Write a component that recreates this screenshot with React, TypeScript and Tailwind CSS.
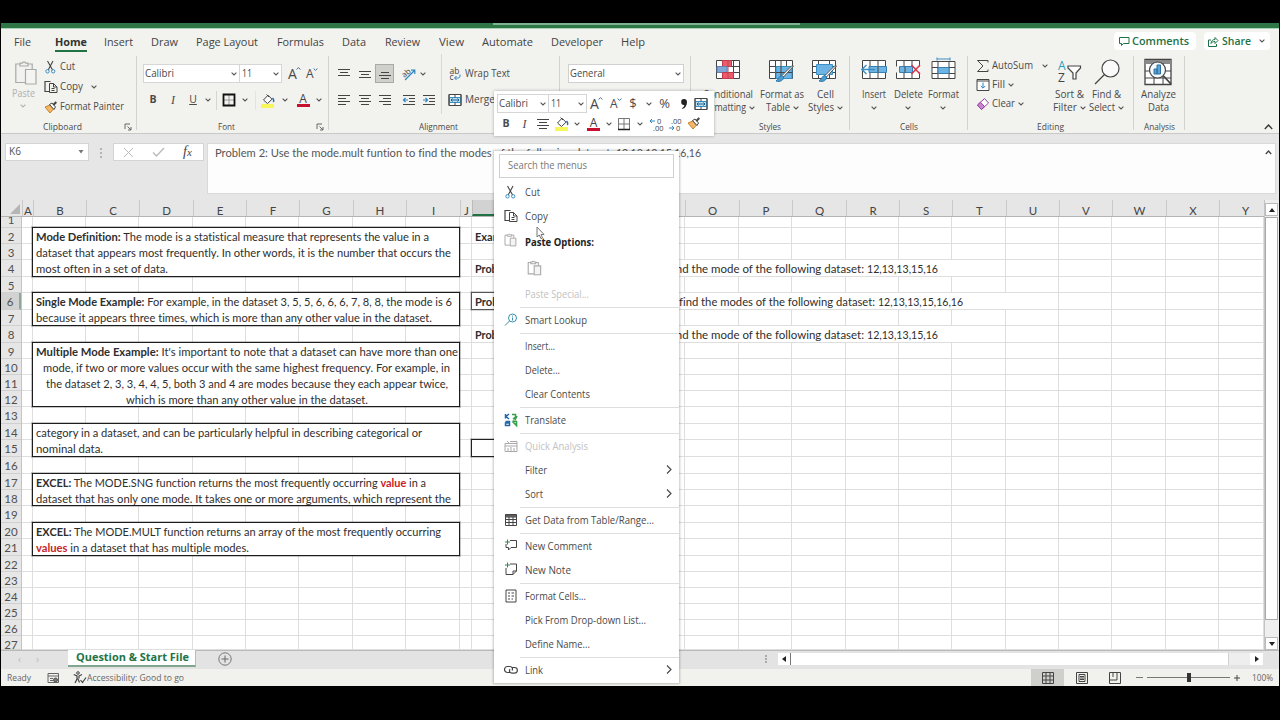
import React, { useLayoutEffect, useRef } from "react";

const UI = "font-['Open_Sans',sans-serif]";
const CELL = "font-['Lato',sans-serif] [font-variant-ligatures:none]";

/* Text that is condensed or stretched to fill the width of its box. */
function Fit({ className = "", children }: { className?: string; children: React.ReactNode }) {
  const box = useRef<HTMLSpanElement>(null);
  const inner = useRef<HTMLSpanElement>(null);
  useLayoutEffect(() => {
    if (!box.current || !inner.current) return;
    inner.current.style.transform = "none";
    const want = box.current.getBoundingClientRect().width;
    const have = inner.current.getBoundingClientRect().width;
    if (have > 0) inner.current.style.transform = `scaleX(${want / have})`;
  }, []);
  return (
    <span ref={box} className={`block shrink-0 whitespace-nowrap ${className}`}>
      <span ref={inner} className="inline-block origin-left whitespace-pre">{children}</span>
    </span>
  );
}

function V({ className = "" }: { className?: string }) {
  return (
    <svg viewBox="0 0 6 4" className={`h-1 w-1.5 shrink-0 ${className}`} fill="none" stroke="#555" strokeWidth="1.1">
      <path d="M.6.7 3 3 5.4.7" />
    </svg>
  );
}
function Caret({ up }: { up?: boolean }) {
  return (
    <svg viewBox="0 0 5 3" width="5" height="3" className="-ml-px shrink-0" fill="none" stroke="#3f6f94" strokeWidth="1">
      <path d={up ? "M.6 2.500 2.500.6l1.900 1.900" : "M.6.5l1.900 1.900L4.400.5"} />
    </svg>
  );
}

type S = { className?: string };
const Svg = ({ w, h, className = "", children }: { w: number; h: number; className?: string; children: React.ReactNode }) => (
  <svg width={w} height={h} viewBox={`0 0 ${w} ${h}`} className={`shrink-0 overflow-visible ${className}`} fill="none" stroke="#444" strokeWidth="1">
    {children}
  </svg>
);

const CutIcon = ({ className }: S) => (
  <Svg w={13} h={14} className={className}>
    <path d="M3.5 1 8.600 10M9 1 4.200 10" strokeWidth="1.1" />
    <circle cx="3.5" cy="11.3" r="1.7" stroke="#3a8fc4" />
    <circle cx="9.2" cy="11.3" r="1.7" stroke="#3a8fc4" />
  </Svg>
);
const CopyIcon = ({ className }: S) => (
  <Svg w={14} h={14} className={className}>
    <path d="M5 11.500H1V1.500h5.500" strokeWidth="1.2" />
    <path d="M5.500 3.500h4L13 7v5.500H5.500zM9.500 3.500V7H13M7.500 8.500h3M7.500 10.500h3" />
  </Svg>
);
const PainterIcon = ({ className }: S) => (
  <Svg w={14} h={13} className={className}>
    <path d="M1 6 6 4l3.500 4L6 12z" fill="#f3b765" stroke="#c9822b" />
    <path d="M5.500 3.500 8 2l3.500 4L10 8.500z" fill="#fff" />
    <path d="m9.300 4 3-3" strokeWidth="2" />
  </Svg>
);
const PasteIcon = ({ w = 24, h = 26 }: { w?: number; h?: number }) => (
  <svg width={w} height={h} viewBox="0 0 24 26" fill="none" stroke="#a9a9a9" strokeWidth={w > 20 ? 1.2 : 1.8} className="shrink-0">
    <path d="M11 22.500H1.800V4H6M14 4h4.200v5M6 6V3.200h2.400C8.600 1.500 11.400 1.500 11.600 3.200H14V6z" />
    <path d="M11.500 9.500h10.500v14.500h-10.500z" fill="#f4f4f2" />
  </svg>
);
const Lines = ({ kind, className }: { kind: string; className?: string }) => {
  const d: Record<string, string> = {
    top: "M1 2.500h12M3 5.500h8M1 8.500h12",
    mid: "M1 4.500h12M3 7.500h8M1 10.500h12",
    bot: "M3 5.500h8M1 8.500h12M3 11.500h8",
    left: "M1 2.500h12M1 5.500h8M1 8.500h12M1 11.500h8",
    center: "M1 2.500h12M3 5.500h8M1 8.500h12M3 11.500h8",
    right: "M1 2.500h12M5 5.500h8M1 8.500h12M5 11.500h8",
  };
  return <Svg w={14} h={14} className={className}><path d={d[kind]} /></Svg>;
};
const Indent = ({ out }: { out?: boolean }) => (
  <Svg w={14} h={14}>
    <path d="M1 2.500h12M7 5.500h6M7 8.500h6M1 11.500h12" />
    <path d={out ? "M6 7H1.500M3.500 5l-2 2 2 2" : "M1 7h4.500M3.500 5l2 2-2 2"} stroke="#2e86c1" strokeWidth="1.2" />
  </Svg>
);
const Bucket = () => (
  <Svg w={15} h={15}>
    <path d="M0 11h13v4H0z" fill="#f7f75a" stroke="none" />
    <path d="M2.500 7 7 2.200l4 4-4.500 4.300zM5.500 1.500 8 4" fill="#fff" />
    <path d="M11.500 5c1.400 1.600 1.500 3 .8 4" stroke="#2e6da4" strokeWidth="1.400" />
  </Svg>
);
const FontColor = () => (
  <span className="flex w-[13px] flex-col items-center">
    <span className="text-[12px] leading-[11px] text-[#444]">A</span>
    <span className="h-[3px] w-[13px] bg-[#c8102e]" />
  </span>
);
const MergeIcon = ({ className }: S) => (
  <Svg w={14} h={14} className={className}>
    <path d="M1 1.500h12v11H1z" fill="#fff" />
    <path d="M1.500 4.500h11v5h-11z" fill="#b9def2" stroke="#3a8fc4" />
    <path d="M3 7h8M4.500 5.500 3 7l1.500 1.500M9.500 5.500 11 7 9.500 8.500" stroke="#1f5f8b" />
    <path d="M7 1.500v3M7 9.500v3M1 1.500h12v11H1z" />
  </Svg>
);
const BorderThick = () => (
  <Svg w={14} h={14}><path d="M7 2v10M2 7h10" stroke="#999" /><path d="M1.500 1.500h11v11h-11z" stroke="#111" strokeWidth="1.800" /></Svg>
);
const BorderThin = () => (
  <Svg w={14} h={14}><path d="M7 1v11M1 7h12M1.500 12V1.500h11V12" stroke="#777" /><path d="M1 12.500h12" stroke="#222" strokeWidth="1.500" /></Svg>
);
const Launcher = () => (
  <Svg w={8} h={8}><path d="M1 6V1h5M3.500 3.500 7 7M7 4v3H4" stroke="#666" /></Svg>
);
const tableGrid = "M.5 2.500h23v18H.5zM.5 8.500h23M.5 14.500h23M6.500 2.500v18M17.500 2.500v18";
const CondIcon = () => (
  <Svg w={24} h={24}>
    <path d={tableGrid} fill="#fff" />
    <path d="M6.500 2.500h9v6h-9z" fill="#ee5a6a" stroke="#c23b4c" />
    <path d="M1 8.500h10v6H1z" fill="#7fa9d8" stroke="#6a7fae" />
    <path d="M6.500 14.500h11v6h-11z" fill="#ee5a6a" stroke="#c23b4c" />
    <path d="M12 2.500v18" stroke="#b04a5a" />
  </Svg>
);
const Brush = () => (
  <>
    <path d="M24.500 8 14.500 19l-1.500-1.500L22.500 8z" fill="#fff" stroke="#555" />
    <path d="M13 17.500c-3 0-3 3.500-6 5.500 4 1.500 8-1 7.500-4z" fill="#4b9cd3" stroke="#2f78ab" />
  </>
);
const FmtTable = () => (
  <Svg w={26} h={26}><path d={tableGrid} fill="#fff" /><path d="M7 8.500h16v12H7z" fill="#6db3e3" stroke="#3a8fc4" /><path d="M12 2.500v18M7 14.500h16" /><Brush /></Svg>
);
const CellStyle = () => (
  <Svg w={26} h={26}><path d={tableGrid} fill="#fff" /><path d="M4.500 6.500h16v10h-16z" fill="#6db3e3" stroke="#3a8fc4" /><Brush /></Svg>
);
const InsertIcon = () => (
  <Svg w={26} h={24}>
    <path d="M1.500 2.500h23v18h-23zM9 2.500v18M17 2.500v18" fill="#fff" />
    <path d="M8 8.500h17.500v6H8z" fill="#6db3e3" stroke="#3a7fb0" /><path d="M17 8.500v6" />
    <path d="M14 11.500H.8M5.500 7l-4.700 4.500 4.700 4.500" stroke="#3a8fc4" strokeWidth="1.400" />
  </Svg>
);
const DeleteIcon = () => (
  <Svg w={26} h={24}>
    <path d="M1.500 2.500h23v18h-23zM9 2.500v18M17 2.500v18" fill="#fff" />
    <path d="M0 8.500h26v6H0z" fill="#f3f3f0" stroke="none" /><path d="M4.500 8.500h13v6h-13z" fill="#6db3e3" stroke="#3a7fb0" /><path d="M10 8.500v6" />
    <path d="m16.500 7 8.500 9M25 7l-8.500 9" stroke="#d9364a" strokeWidth="1.500" />
  </Svg>
);
const FormatIcon = () => (
  <Svg w={25} h={26} className="-mt-px">
    <path d="M6 .5v3M19 .5v3M6 2h13" stroke="#3a8fc4" />
    <path d="M1 4.500h23v17H1zM1 10.500h23M1 16.500h23M7 4.500v17M18 4.500v17" fill="#fff" />
    <path d="M7 10.500h11v6H7z" fill="#6db3e3" stroke="#3a7fb0" />
  </Svg>
);
const AnalyzeIcon = () => (
  <Svg w={28} h={28}>
    <path d="M1 1.500h26v25H1z" fill="#fff" strokeWidth="1.300" /><path d="M1 2h26v4H1z" fill="#8a8a8a" stroke="none" />
    <path d="M1 13h26M1 20h26M10 5v22M19 5v22" />
    <circle cx="13.500" cy="12" r="8" fill="#f4faff" strokeWidth="1.200" />
    <path d="M10 11v5h3v-5zM13 7v9h3.500V7z" fill="#5ba4d6" stroke="#2f6f9f" />
    <path d="M19.500 18 27 26" strokeWidth="1.800" />
  </Svg>
);

function Big({ icon, a, b, w, wa, wb, chev = true }: { icon: React.ReactNode; a: string; b?: string; w: string; wa: string; wb?: string; chev?: boolean }) {
  return (
    <div className={`flex shrink-0 flex-col items-center pt-1 ${w}`}>
      <div className="flex h-[29px] items-start justify-center">{icon}</div>
      <Fit className={`leading-[14px] ${wa}`}>{a}</Fit>
      <div className="flex h-[13px] items-center justify-center gap-[3px]">
        {b && <Fit className={`leading-[13px] ${wb}`}>{b}</Fit>}
        {chev && <V />}
      </div>
    </div>
  );
}

function Group({ w, label, lw, launch, children, border = true }: { w: string; label: string; lw: string; launch?: boolean; children: React.ReactNode; border?: boolean }) {
  return (
    <section className={`flex h-20 shrink-0 flex-col ${w}`}>
      <div className="flex h-[76px] flex-col">
        <div className={`mt-0.5 flex h-[74px] flex-col ${border ? "border-r border-[#d2d2d0]" : ""}`}>
          <div className="-mt-0.5 flex h-[66px] shrink-0">{children}</div>
          <div className="flex h-[14px] shrink-0 items-center justify-center text-[9px] text-[#4a4a4a]">
            <span className="flex flex-1 justify-center"><Fit className={`leading-[14px] ${lw}`}>{label}</Fit></span>
            {launch && <span className="w-[12px]"><Launcher /></span>}
          </div>
        </div>
      </div>
    </section>
  );
}

const C = ({ w, children }: { w: string; children?: React.ReactNode }) => (
  <span className={`flex h-full shrink-0 items-center justify-center ${w}`}>{children}</span>
);

const tabs: [string, string][] = [
  ["File", "ml-[13px] w-[17px]"], ["Home", "ml-[24px] w-[32px]"], ["Insert", "ml-[17px] w-[29px]"], ["Draw", "ml-[18px] w-[27px]"],
  ["Page Layout", "ml-[18px] w-[62px]"], ["Formulas", "ml-[19px] w-[47px]"], ["Data", "ml-[18px] w-[24px]"], ["Review", "ml-[19px] w-[35px]"],
  ["View", "ml-[19px] w-[25px]"], ["Automate", "ml-[18px] w-[51px]"], ["Developer", "ml-[18px] w-[52px]"], ["Help", "ml-[18px] w-[24px]"],
];

function Tabs() {
  return (
    <nav className="flex h-[25px] shrink-0 items-start text-[11px] text-[#444]">
      {tabs.map(([t, c]) => (
        <div key={t} className={`flex h-[23px] shrink-0 flex-col ${c} ${t === "Home" ? "border-b-2 border-[#217346] font-bold text-[#333]" : ""}`}>
          <Fit className="w-full leading-[25px]">{t}</Fit>
        </div>
      ))}
      <div className="ml-auto mr-[9px] flex gap-2 pt-[3px] font-semibold text-[#1e7145]">
        <div className="flex h-[18px] w-[82px] items-center rounded-sm bg-white pl-[5px]">
          <Svg w={11} h={11}><path d="M.5 1.500h9.500v6H4.500L2.500 9.500v-2h-2z" stroke="#1e7145" /></Svg>
          <Fit className="ml-0.5 w-[57px]">Comments</Fit>
        </div>
        <div className="flex h-[18px] w-[66px] items-center rounded-sm bg-white pl-[4px]">
          <Svg w={11} h={11}><path d="M3 4H.5v6.500h8V8M3 7.500c.3-3 2-4 4-4V1.500l3 3-3 3V5.500c-2 0-3 .5-4 2z" stroke="#1e7145" /></Svg>
          <Fit className="ml-[3px] w-[29px]">Share</Fit>
          <V className="ml-2" />
        </div>
      </div>
    </nav>
  );
}

function Ribbon() {
  return (
    <div className="flex h-20 shrink-0 border-b border-[#c9c9c7] text-[10.500px] text-[#4a4a4a]">
      <Group w="w-[136px]" label="Clipboard" lw="w-[39px]" launch>
        <div className="flex w-[43px] flex-col items-center pt-[6px] text-[#b0b0b0]">
          <span className="pl-1.5"><PasteIcon /></span>
          <Fit className="mt-px ml-0.5 w-[23px] leading-[13px]">Paste</Fit>
          <V className="mt-1 opacity-40" />
        </div>
        <div className="flex flex-col pt-[3px]">
          <div className="flex h-5 items-center"><CutIcon /><Fit className="ml-[3px] w-[15px]">Cut</Fit></div>
          <div className="flex h-5 items-center"><CopyIcon /><Fit className="ml-[2px] w-[23px]">Copy</Fit><V className="ml-2" /></div>
          <div className="flex h-5 items-center"><PainterIcon /><Fit className="ml-[2px] w-[64px]">Format Painter</Fit></div>
        </div>
      </Group>
      <Group w="w-[192px]" label="Font" lw="w-[17px]" launch>
        <div className="flex flex-col pl-[6px] pt-[6px]">
          <div className="flex h-[27px] items-center">
            <div className="flex h-[19px] w-[97px] items-center border border-[#d6d6d6] bg-white pl-px"><Fit className="w-[29px]">Calibri</Fit><V className="ml-auto mr-0.5" /></div>
            <div className="flex h-[19px] w-[42px] items-center border border-l-0 border-[#d6d6d6] bg-white pl-0.5"><Fit className="w-[10px]">11</Fit><V className="ml-auto mr-0.5" /></div>
            <span className="ml-1 flex w-[20px] pl-0.5 text-[14px] leading-none">A<Caret up /></span>
            <span className="flex text-[12px] leading-none">A<Caret /></span>
          </div>
          <div className="flex h-[26px] items-center">
            <C w="w-[20px]"><b>B</b></C><C w="w-[20px]"><i className="font-['Liberation_Serif',serif] text-[12px]">I</i></C><C w="w-[20px]"><u>U</u></C><C w="w-[10px]"><V /></C>
            <span className="ml-[3px] h-[19px] w-px bg-[#d5d5d3]" />
            <C w="w-[24px]"><BorderThick /></C><C w="w-[8px]"><V /></C>
            <span className="ml-1.5 h-[19px] w-px bg-[#e3e3e1]" />
            <C w="w-[25px]"><Bucket /></C><C w="w-[8px]"><V /></C>
            <C w="w-[28px]"><FontColor /></C><C w="w-[4px]"><V /></C>
          </div>
        </div>
      </Group>
      <Group w="w-[231px]" label="Alignment" lw="w-[39px]" launch>
        <div className="flex h-[60px] w-[113px] flex-col border-r border-[#d8d8d6] pl-[5px] pt-[6px]">
          <div className="flex h-[27px] items-center">
            <C w="w-[20px]"><Lines kind="top" /></C><C w="w-[21px]"><Lines kind="mid" /></C>
            <span className="flex h-[19px] w-[19px] items-center justify-center border border-[#a9a9a7] bg-[#cfcfcc]"><Lines kind="bot" /></span>
            <C w="w-[30px]"><Svg w={14} h={14}><path d="M3 13 12.500 3.500M9 3.200h3.800V7" stroke="#2e86c1" strokeWidth="1.200" /><text x="0" y="9" fontSize="8" fill="#444" stroke="none" transform="rotate(-40 4 7)">ab</text></Svg></C>
            <V className="-ml-1" />
          </div>
          <div className="flex h-[26px] items-center">
            <C w="w-[20px]"><Lines kind="left" /></C><C w="w-[21px]"><Lines kind="center" /></C><C w="w-[19px]"><Lines kind="right" /></C>
            <C w="w-[30px]"><Indent out /></C><C w="w-[10px]"><Indent /></C>
          </div>
        </div>
        <div className="flex flex-col pl-[6px] pt-[6px]">
          <div className="flex h-[27px] items-center">
            <Svg w={14} h={14}><text x="1.500" y="7" fontSize="8.500" fill="#444" stroke="none">ab</text><text x="1.500" y="13" fontSize="8.500" fill="#444" stroke="none">c</text><path d="M12 7.500v1.500c0 1.500-1 2-2.500 2H7M8.500 9l-2 2 2 2" stroke="#2e86c1" /></Svg>
            <Fit className="ml-[3px] w-[45px]">Wrap Text</Fit>
          </div>
          <div className="flex h-[26px] items-center"><MergeIcon /><Fit className="ml-[3px] w-[74px]">Merge &amp; Center</Fit></div>
        </div>
      </Group>
      <Group w="w-[131px]" label="Number" lw="w-[32px]" launch>
        <div className="flex pl-[8px] pt-[10px]">
          <div className="flex h-[19px] w-[116px] items-center border border-[#d0d0d0] bg-white pl-px"><Fit className="w-[35px]">General</Fit><V className="ml-auto mr-0.5" /></div>
        </div>
      </Group>
      <Group w="w-[159px]" label="Styles" lw="w-[22px]">
        <div className="flex pl-[10px]">
          <Big w="w-[54px]" icon={<CondIcon />} a="Conditional" wa="w-[50px]" b="Formatting" wb="w-[45px]" />
          <Big w="w-[54px]" icon={<FmtTable />} a="Format as" wa="w-[44px]" b="Table" wb="w-[24px]" />
          <Big w="w-[32px]" icon={<CellStyle />} a="Cell" wa="w-[17px]" b="Styles" wb="w-[26px]" />
        </div>
      </Group>
      <Group w="w-[118px]" label="Cells" lw="w-[18px]">
        <div className="flex pl-[8px]">
          <Big w="w-[32px]" icon={<InsertIcon />} a="Insert" wa="w-[24px]" />
          <Big w="w-[36px]" icon={<DeleteIcon />} a="Delete" wa="w-[29px]" />
          <Big w="w-[34px]" icon={<FormatIcon />} a="Format" wa="w-[31px]" />
        </div>
      </Group>
      <Group w="w-[166px]" label="Editing" lw="w-[27px]">
        <div className="flex w-[82px] flex-col pl-[8px] pt-[2px]">
          <div className="flex h-[19px] items-center"><Svg w={14} h={14}><path d="M12 3.500V1.500H1.500L7 7l-5.500 5.500H12v-2" /></Svg><Fit className="ml-[2px] w-[41px]">AutoSum</Fit><V className="ml-[9px]" /></div>
          <div className="flex h-[19px] items-center"><Svg w={14} h={14}><path d="M1 1.500h12v11H1z" fill="#fff" /><path d="M1 3h12" /><path d="M7 4.500V10M4.800 8 7 10.200 9.200 8" stroke="#2e86c1" /></Svg><Fit className="ml-[2px] w-[13px]">Fill</Fit><V className="ml-[3px]" /></div>
          <div className="flex h-[19px] items-center"><Svg w={14} h={14}><path d="M1.500 8 8.500 1.500l4 4.500-7 6.500z" fill="#fff" stroke="#9b3fa5" /><path d="M1.500 8 4.500 5.200l4 4.500-3 2.800z" fill="#c887cf" stroke="#9b3fa5" /></Svg><Fit className="ml-[2px] w-[23px]">Clear</Fit><V className="ml-[3px]" /></div>
        </div>
        <Big w="w-[38px]" icon={<Svg w={26} h={26}><text x="2" y="12" fontSize="12" fill="#2e9bbd" stroke="none">A</text><text x="2" y="24" fontSize="12" fill="#444" stroke="none">Z</text><path d="M12 8h12.500v2l-4.500 5v6h-3v-6l-5-5z" fill="#fff" strokeWidth="1.200" /></Svg>} a="Sort &" wa="w-[29px]" b="Filter" wb="w-[24px]" />
        <Big w="w-[37px]" icon={<Svg w={26} h={27}><circle cx="16.500" cy="10.500" r="8.500" fill="#fafafa" strokeWidth="1.200" /><path d="M10.500 16.500 1 26" strokeWidth="1.200" /></Svg>} a="Find &" wa="w-[29px]" b="Select" wb="w-[26px]" />
      </Group>
      <Group w="w-[51px]" label="Analysis" lw="w-[31px]">
        <Big w="w-[48px]" icon={<AnalyzeIcon />} a="Analyze" wa="w-[35px]" b="Data" wb="w-[21px]" chev={false} />
      </Group>
      <div className="flex flex-1 items-end justify-end pb-[3px] pr-1.5">
        <svg width="9" height="6" viewBox="0 0 9 6" fill="none" stroke="#333" strokeWidth="1.300"><path d="m.8 5 3.700-4 3.700 4" /></svg>
      </div>
    </div>
  );
}

function FormulaBar() {
  return (
    <div className="flex h-[66px] shrink-0 items-start bg-[#e6e6e6] pt-[9px] text-[10.500px] text-[#555]">
      <div className="ml-[4px] flex h-[18px] w-[84px] items-center border border-[#d4d4d4] bg-white pl-[3px]">
        <Fit className="w-[12px]">K6</Fit>
        <svg width="6" height="4" className="ml-auto mr-1" viewBox="0 0 6 4"><path d="M.5 0h5L3 3.500z" fill="#777" /></svg>
      </div>
      <div className="ml-[11px] flex h-[19px] flex-col justify-center gap-0.5">
        {[0, 1, 2].map((i) => <i key={i} className="size-0.5 bg-[#b5b5b5]" />)}
      </div>
      <div className="ml-[11px] flex h-[18px] w-[91px] items-center border border-[#d4d4d4] bg-white pl-[9px]">
        <Svg w={11} h={11}><path d="m1 1 9 9M10 1l-9 9" stroke="#bbb" /></Svg>
        <Svg w={13} h={10} className="ml-[18px]"><path d="m1 5.500 3.500 3.500L12 1" stroke="#bbb" strokeWidth="1.400" /></Svg>
        <i className="ml-[18px] font-['Liberation_Serif',serif] text-[14px] leading-none text-[#444]">f<span className="text-[11px]">x</span></i>
      </div>
      <div className="ml-[3px] flex h-[51px] w-[1069px] items-start border border-[#d9d9d9] bg-[#fdfdfd] pl-[7px] pt-[2px]">
        <div className={`flex text-[11px] leading-[13px] ${CELL}`}>
          <Fit className="w-[401px]">Problem 2: Use the mode.mult funtion to find the modes of the following dataset: </Fit>
          <Fit className="w-[85px]">12,13,13,15,16,16</Fit>
        </div>
        <svg width="7" height="5" viewBox="0 0 7 5" className="ml-auto mr-[3px] mt-1" fill="none" stroke="#444" strokeWidth="1.300"><path d="m.8 4 2.700-3 2.700 3" /></svg>
      </div>
    </div>
  );
}

const COLS = "grid-cols-[11px_53px_53px_54px_53px_53px_54px_53px_54px_12px_53px_54px_53px_53px_54px_53px_54px_53px_53px_54px_53px_53px_54px_53px_45px]";
const ROWS = "grid-rows-[11px_16px_16px_17px_16px_17px_16px_17px_16px_16px_16px_16px_17px_16px_17px_17px_16px_16px_17px_16px_17px_16px_16px_16px_16px_16px_14px]";
const letters = "ABCDEFGHIJKLMNOPQRSTUVWXY".split("");
const rowNumbers = Array.from({ length: 27 }, (_, i) => i + 1);

const Box = ({ area, children }: { area: string; children: React.ReactNode }) => (
  <div className={`z-[1] -ml-px -mt-px flex flex-col overflow-hidden border border-[#1c1c1c] bg-white pl-[2.500px] pt-px leading-[16px] shadow-[0_0_0_1px_rgba(0,0,0,0.22)] ${area}`}>{children}</div>
);
const Red = ({ children }: { children: React.ReactNode }) => <b className="text-[#c81e2b]">{children}</b>;

function Problem({ area, n, fn, headW, tail, tailW, nums, numsW }: { area: string; n: number; fn: string; headW: string; tail: string; tailW: string; nums: string; numsW: string }) {
  return (
    <div className={`mb-px flex bg-white pl-[3px] pt-px leading-[16px] ${area}`}>
      <Fit className={headW}><b>Problem {n}:</b> Use the {fn} funtion to </Fit>
      <Fit className={tailW}>{tail}</Fit>
      <Fit className={numsW}>{nums}</Fit>
    </div>
  );
}

function Sheet() {
  return (
    <div className="flex h-[450px] shrink-0 bg-[#e6e6e6]">
      <div className="flex w-[1263px] flex-col">
        <div className="flex h-[17px] shrink-0 border-b border-[#b4b4b4]">
          <div className="flex w-[21px] items-end justify-end pb-0.5 pr-[2px]">
            <svg width="10" height="10"><path d="M10 0v10H0z" fill="#b5b5b5" /></svg>
          </div>
          <div className={`grid ${COLS} ${CELL} text-[11.500px] text-[#444]`}>
            {letters.map((l) => (
              <div key={l} className={`flex h-4 items-center justify-center overflow-hidden border-l pt-[5px] leading-none ${l === "K" ? "border-b-2 border-[#bbb] border-b-[#217346] bg-[#d2d2d2]" : "border-[#c9c9c9]"} ${l === "Y" ? "pl-[7px]" : ""}`}>{l}</div>
            ))}
          </div>
        </div>
        <div className="flex h-[433px] overflow-hidden">
          <div className={`grid w-[21px] ${ROWS} ${CELL} border-r border-[#c4c4c4] text-[11.500px] text-[#505050]`}>
            {rowNumbers.map((r) => (
              <div key={r} className={`flex justify-center overflow-hidden border-b border-[#d0d0d0] leading-[18px] ${r === 6 ? "border-r-2 border-r-[#8fa899] bg-[#d2d2d2]" : ""}`}>
                <span className={r === 1 ? "-mt-[6px]" : ""}>{r}</span>
              </div>
            ))}
          </div>
          <div className={`grid ${COLS} ${ROWS} ${CELL} bg-white text-[11px] text-[#2e2e2e]`}>
            {rowNumbers.map((r) => letters.map((l, c) => (
              <div key={l + r} className="border-b border-r border-[#dedede]" style={{ gridRow: r, gridColumn: c + 1 }} />
            )))}
            <Box area="[grid-area:2/2/5/10]">
              <Fit className="w-[393px]"><b>Mode Definition:</b> The mode is a statistical measure that represents the value in a</Fit>
              <Fit className="w-[415px]">dataset that appears most frequently. In other words, it is the number that occurs the</Fit>
              <Fit className="w-[132px]">most often in a set of data.</Fit>
            </Box>
            <Box area="[grid-area:6/2/8/10]">
              <Fit className="w-[416px]"><b>Single Mode Example:</b> For example, in the dataset 3, 5, 5, 6, 6, 6, 7, 8, 8, the mode is 6</Fit>
              <Fit className="w-[396px]">because it appears three times, which is more than any other value in the dataset.</Fit>
            </Box>
            <Box area="[grid-area:9/2/13/10]">
              <Fit className="w-[422px]"><b>Multiple Mode Example:</b> It's important to note that a dataset can have more than one</Fit>
              <Fit className="ml-[7px] w-[407px]">mode, if two or more values occur with the same highest frequency. For example, in</Fit>
              <Fit className="ml-[10px] w-[402px]">the dataset 2, 3, 3, 4, 4, 5, both 3 and 4 are modes because they each appear twice,</Fit>
              <Fit className="ml-[90px] w-[242px]">which is more than any other value in the dataset.</Fit>
            </Box>
            <Box area="[grid-area:14/2/16/10]">
              <Fit className="w-[386px]">category in a dataset, and can be particularly helpful in describing categorical or</Fit>
              <Fit className="w-[67px]">nominal data.</Fit>
            </Box>
            <Box area="[grid-area:17/2/19/10]">
              <Fit className="w-[390px]"><b>EXCEL:</b> The MODE.SNG function returns the most frequently occurring <Red>value</Red> in a</Fit>
              <Fit className="w-[415px]">dataset that has only one mode. It takes one or more arguments, which represent the</Fit>
            </Box>
            <Box area="[grid-area:20/2/22/10]">
              <Fit className="w-[405px]"><b>EXCEL:</b> The MODE.MULT function returns an array of the most frequently occurring</Fit>
              <Fit className="w-[213px]"><Red>values</Red> in a dataset that has multiple modes.</Fit>
            </Box>
            <div className="mb-px bg-white pl-[3px] leading-[18px] [grid-area:2/11/3/13]"><b>Examples:</b></div>
            <Problem area="[grid-area:4/11/5/20]" n={1} fn="mode.sngl" headW="w-[194px]" tail="find the mode of the following dataset: " tailW="w-[198px]" nums="12,13,13,15,16" numsW="w-[71px]" />
            <Problem area="[grid-area:6/11/7/21]" n={2} fn="mode.mult" headW="w-[204px]" tail="find the modes of the following dataset: " tailW="w-[199px]" nums="12,13,13,15,16,16" numsW="w-[85px]" />
            <Problem area="[grid-area:8/11/9/20]" n={3} fn="mode.sngl" headW="w-[194px]" tail="find the mode of the following dataset: " tailW="w-[198px]" nums="12,13,13,15,16" numsW="w-[71px]" />
            <div className="-ml-px -mt-px border border-[#555] shadow-[0_0_0_1px_rgba(0,0,0,0.15)] [grid-area:6/11/7/12]" />
            <div className="-ml-px -mt-px border border-[#222] shadow-[0_0_0_1px_rgba(0,0,0,0.2)] [grid-area:15/11/16/13]" />
          </div>
        </div>
      </div>
      <div className="flex w-[15px] flex-col border-l border-[#c4c4c4] bg-[#efefef] pt-[3px]">
        <div className="flex h-[13px] w-[13px] items-center justify-center border border-[#bbb] bg-white"><svg width="6" height="4"><path d="M0 4h6L3 0z" fill="#222" /></svg></div>
        <div className="mt-px h-[403px] w-[13px] border border-[#aaa] bg-white" />
        <div className="mt-auto flex h-[13px] w-[13px] items-center justify-center border border-[#bbb] bg-white"><svg width="6" height="4"><path d="M0 0h6L3 4z" fill="#222" /></svg></div>
      </div>
    </div>
  );
}

function SheetTabs() {
  return (
    <div className="flex h-[19px] shrink-0 items-start border-t border-[#b9b9b9] bg-[#e3e3e3]">
      <span className="ml-[17px] w-[18px] text-[10px] leading-[16px] text-[#bbb]">‹</span>
      <span className="w-[32px] text-[10px] leading-[16px] text-[#bbb]">›</span>
      <div className="-mt-px h-[17px] w-[128px] border-b-2 border-r border-[#7fa78f] border-r-[#bbb] bg-white pl-2 text-[11px] font-bold text-[#217346]">
        <Fit className="w-[113px] leading-[14px]">Question &amp; Start File</Fit>
      </div>
      <Svg w={14} h={14} className="ml-[22px] mt-px"><circle cx="7" cy="7" r="6.200" stroke="#777" /><path d="M7 3.500v7M3.500 7h7" stroke="#666" /></Svg>
      <div className="ml-[533px] flex flex-col gap-px pt-1">{[0, 1, 2].map((i) => <i key={i} className="size-0.5 bg-[#aaa]" />)}</div>
      <div className="ml-[11px] mt-[2px] flex h-3 w-3 items-center justify-center bg-white"><svg width="4" height="6"><path d="M4 0v6L0 3z" fill="#222" /></svg></div>
      <div className="mt-[2px] h-3 w-[439px] border-l border-r border-[#d0d0d0] border-l-[#777] bg-white" />
      <div className="mt-[2px] h-3 w-[21px] bg-[#eee]" />
      <div className="mt-[2px] flex h-3 w-[13px] items-center justify-center bg-white"><svg width="4" height="6"><path d="M0 0v6l4-3z" fill="#222" /></svg></div>
    </div>
  );
}

function StatusBar() {
  return (
    <footer className="flex h-[17px] shrink-0 items-center bg-[#f1f1ee] text-[9.500px] text-[#666]">
      <Fit className="ml-[6px] w-[24px] pt-0.5">Ready</Fit>
      <Svg w={12} h={12} className="ml-[16px]"><path d="M1 1.500h10.500v9H1zM1 4h10.500M3 6.500h3M3 8.500h3" stroke="#666" /><circle cx="8.500" cy="8" r="2" fill="#777" stroke="#555" /></Svg>
      <Svg w={14} h={13} className="ml-[14px]"><circle cx="5" cy="2" r="1.300" /><path d="M.8 3.500 4 5v3l-2 4M9 3.500 6 5v2.500M4 8h1l1.500 3.500M7.500 9l2 2.500L13 6.500" strokeWidth="1.200" /></Svg>
      <Fit className="w-[97px] pt-0.5">Accessibility: Good to go</Fit>
      <div className="ml-auto mr-1.5 flex h-full items-center">
        <span className="flex h-full w-[33px] items-center justify-center bg-[#cfcfcc]"><Svg w={12} h={12}><path d="M.5.5h11v11H.5zM.5 4h11M.5 8h11M4 .5v11M8 .5v11" /></Svg></span>
        <Svg w={12} h={12} className="ml-[12px]"><path d="M.5.5h11v11H.5zM3 2.500h6v7H3zM4 4.500h4M4 6h4M4 7.500h4" /></Svg>
        <Svg w={12} h={12} className="ml-[21px]"><path d="M.5.5h11v11H.5zM4 .5v4.500M8 .5V8M.5 8H8" /></Svg>
        <span className="ml-[15px] h-px w-[7px] bg-[#777]" />
        <span className="ml-[4px] flex w-[83px] items-center"><i className="h-px w-10 bg-[#777]" /><i className="h-[9px] w-1 bg-[#333]" /><i className="h-px flex-1 bg-[#777]" /></span>
        <Svg w={8} h={8} className="ml-[3px]"><path d="M4 1v6M1 4h6" /></Svg>
        <Fit className="ml-[11px] w-[21px] pt-0.5">100%</Fit>
      </div>
    </footer>
  );
}

function MiniToolbar() {
  return (
    <div className="absolute left-[494px] top-[91px] flex h-[45px] w-[220px] flex-col bg-white pl-[3px] pt-[3px] text-[10.500px] text-[#4a4a4a] shadow-[0_0_3px_rgba(0,0,0,0.3)]">
      <div className="flex h-[19px] items-center">
        <div className="flex h-[19px] w-[52px] items-center border border-[#d6d6d6] pl-px"><Fit className="w-[29px]">Calibri</Fit><V className="ml-auto mr-0.5" /></div>
        <div className="flex h-[19px] w-[38px] items-center border border-l-0 border-[#d6d6d6] pl-0.5"><Fit className="w-[10px]">11</Fit><V className="ml-auto mr-0.5" /></div>
        <span className="ml-[3px] flex w-[20px] text-[14px] leading-none">A<Caret up /></span>
        <span className="flex w-[15px] text-[12px] leading-none">A<Caret /></span>
        <C w="w-[16px]"><span className="text-[13px]">$</span></C><C w="w-[16px]"><V /></C>
        <C w="w-[15px]"><span className="text-[13px]">%</span></C>
        <C w="w-[23px]"><Svg w={8} h={12}><path d="M4 1a2.700 2.700 0 0 1 3 2.800C7 7.500 5.500 10 2.500 11l-.5-.8c1.500-.8 2.300-2 2.300-3.200A2.900 2.900 0 0 1 1.200 4 2.800 2.800 0 0 1 4 1z" fill="#222" stroke="none" /></Svg></C>
        <MergeIcon className="-ml-px" />
      </div>
      <div className="flex h-[21px] items-center">
        <C w="w-[18px]"><b>B</b></C><C w="w-[19px]"><i className="font-['Liberation_Serif',serif] text-[12px]">I</i></C>
        <C w="w-[18px]"><Lines kind="center" /></C><C w="w-[21px]"><Bucket /></C><C w="w-[7px]"><V /></C>
        <C w="w-[27px]"><FontColor /></C><C w="w-[3px]"><V /></C>
        <C w="w-[28px]"><BorderThin /></C><C w="w-[4px]"><V /></C>
        <C w="w-[27px]"><Svg w={14} h={14}><text x="8" y="7" fontSize="7.500" fill="#444" stroke="none">0</text><text x="4" y="14" fontSize="7.500" fill="#444" stroke="none">.00</text><path d="M6 4H1M3 2 1 4l2 2" stroke="#2e86c1" /></Svg></C>
        <C w="w-[11px]"><Svg w={14} h={14}><text x="3" y="7" fontSize="7.500" fill="#444" stroke="none">.00</text><text x="8" y="14" fontSize="7.500" fill="#444" stroke="none">0</text><path d="M1 11h5M4 9l2 2-2 2" stroke="#2e86c1" /></Svg></C>
        <C w="w-[27px]"><PainterIcon /></C>
      </div>
    </div>
  );
}

const Sep = () => <div className="ml-[26px] mb-px h-px shrink-0 bg-[#dedede]" />;
function Item({ icon, label, w, off, bold, sub }: { icon?: React.ReactNode; label: string; w: string; off?: boolean; bold?: boolean; sub?: boolean }) {
  return (
    <div className={`flex h-6 shrink-0 items-center ${off ? "text-[#c2c2c2]" : "text-[#4a4a4a]"} ${bold ? "font-bold text-[#222]" : ""}`}>
      <span className="flex w-[30.500px] shrink-0 items-center justify-center pl-[3px]">{icon}</span>
      <Fit className={w}>{label}</Fit>
      {sub && <svg width="6" height="9" viewBox="0 0 6 9" className="mb-[3px] ml-auto mr-[7px]" fill="none" stroke="#444" strokeWidth="1.100"><path d="m1 .5 4 4-4 4" /></svg>}
    </div>
  );
}

function ContextMenu() {
  return (
    <div className="absolute left-[494px] top-[151px] flex h-[532px] w-[185px] flex-col bg-white text-[10.500px] shadow-[0_0_2px_1px_rgba(0,0,0,0.22)]">
      <div className="mx-[5px] mb-[3px] mt-[3px] flex h-[24px] shrink-0 items-center border border-[#d0d0d0] pl-2 text-[#777]"><Fit className="w-[79px]">Search the menus</Fit></div>
      <Item icon={<CutIcon className="mb-0.5" />} label="Cut" w="w-[15px]" />
      <Item icon={<CopyIcon className="mb-0.5" />} label="Copy" w="w-[23px]" />
      <div className="h-0.5 shrink-0" />
      <Item icon={<span className="mb-1.5"><PasteIcon w={13} h={14} /></span>} label="Paste Options:" w="w-[69px]" bold />
      <div className="flex h-7 shrink-0 items-center pb-0.5 pl-[33px]"><PasteIcon w={15} h={16} /></div>
      <Item label="Paste Special..." w="w-[64px]" off />
      <Sep />
      <Item icon={<Svg w={14} h={14} className="mb-0.5"><circle cx="8.500" cy="5" r="4" stroke="#3a8fa8" /><path d="M5.500 8 1 12.500M8.500 4.500v3M8.500 2.600v1" stroke="#3a8fa8" /></Svg>} label="Smart Lookup" w="w-[62px]" />
      <Sep />
      <Item label="Insert..." w="w-[30px]" />
      <Item label="Delete..." w="w-[35px]" />
      <Item label="Clear Contents" w="w-[65px]" />
      <Sep />
      <Item icon={<Svg w={14} h={14} className="mb-0.5"><path d="M1.500 1v4.500M5 1 2 3.500 5 6M1.500 8.500h4v4h-4v-2.500h4" stroke="#2467a8" strokeWidth="1.500" /><path d="M8 1.500h3.500v3l-2.500 1.500M13 3 11 7M8.500 8l4 .5v4l-4-4" stroke="#35a04a" strokeWidth="1.600" /></Svg>} label="Translate" w="w-[41px]" />
      <Sep />
      <Item icon={<Svg w={14} h={13} className="mb-0.5"><path d="M1 3.500V11.500h12v-8zM1 6h12M4 11V8M7 11V7M10 11V8M3 1l2 2M6 1.500h7v2" stroke="#aaa" /></Svg>} label="Quick Analysis" w="w-[63px]" off />
      <Item label="Filter" w="w-[22px]" sub />
      <Item label="Sort" w="w-[18px]" sub />
      <Sep />
      <Item icon={<Svg w={14} h={14} className="mb-0.5"><path d="M1.500 1.500h11v11h-11zM1.500 6.500h11M1.500 9.500h11M5 3.500v9M9 3.500v9" /><path d="M1.500 2h11v2h-11z" fill="#777" /></Svg>} label="Get Data from Table/Range..." w="w-[129px]" />
      <Sep />
      <Item icon={<Svg w={14} h={13} className="mb-1"><path d="M6 1.500h6.500v7H7L4.500 11V8.500H2V5" /><path d="M3.500.5v5M1 3h5" stroke="#2e8b57" /></Svg>} label="New Comment" w="w-[67px]" />
      <Item icon={<Svg w={14} h={14} className="mb-1"><path d="M6 2h6.500v7L9 12.500H2V6M12.500 9H9v3.500" /><path d="M3.500.5v5M1 3h5" stroke="#2e8b57" /></Svg>} label="New Note" w="w-[46px]" />
      <Sep />
      <Item icon={<Svg w={14} h={14} className="mb-0.5"><path d="M2 1h10v12H2zM4 4h2M4 7h2M4 10h2M7.500 4H10M7.500 7H10M7.500 10H9" /></Svg>} label="Format Cells..." w="w-[61px]" />
      <Item label="Pick From Drop-down List..." w="w-[121px]" />
      <Item label="Define Name..." w="w-[65px]" />
      <Sep />
      <Item icon={<Svg w={14} h={10} className="mb-0.5"><path d="M6 7.500H3.500a3 3 0 0 1 0-6H6a2.500 2.500 0 0 1 2 4M8 2.500h2.500a2.800 2.800 0 0 1 0 5.700H8a2.500 2.500 0 0 1-2-4" strokeWidth="1.200" /></Svg>} label="Link" w="w-[18px]" sub />
    </div>
  );
}

export default function App() {
  return (
    <div className={`relative flex h-[720px] w-[1280px] flex-col overflow-hidden bg-black px-px pt-[23px] ${UI}`}>
      <div className="flex h-[6px] shrink-0 items-start border-b border-[#a9d3b6] bg-[#2f7647]">
        <div className="ml-[492px] h-[2px] w-[307px] bg-[#7fb492]" />
      </div>
      <div className="flex h-[105px] shrink-0 flex-col bg-[#f2f2ee]">
        <Tabs />
        <Ribbon />
      </div>
      <FormulaBar />
      <Sheet />
      <SheetTabs />
      <StatusBar />
      <MiniToolbar />
      <ContextMenu />
      <svg width="9" height="14" viewBox="0 0 9 14" className="absolute left-[536px] top-[226px]"><path d="M1 1v10l2.300-2L5 12.700l1.500-.7L5 8.500h3z" fill="#fff" stroke="#777" /></svg>
    </div>
  );
}
